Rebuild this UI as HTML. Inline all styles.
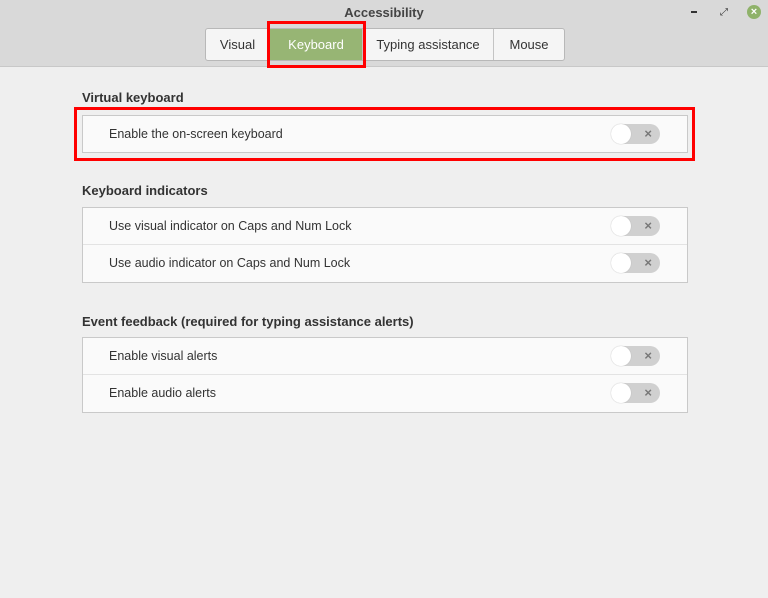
<!DOCTYPE html>
<html><head><style>
*{box-sizing:border-box;margin:0;padding:0}
body{width:768px;height:598px;background:#efefef;font-family:"Liberation Sans","DejaVu Sans",sans-serif;position:relative;overflow:hidden;color:#333}
.hdr{position:absolute;left:0;top:0;width:768px;height:67px;background:#d9d9d9;border-bottom:1px solid #c8c8c8}
.title{position:absolute;top:5px;left:0;width:768px;text-align:center;font-size:13px;font-weight:bold;color:#444}
.tabs{position:absolute;left:205px;top:28px;height:33px;display:flex;border:1px solid #b8b8b8;border-radius:3px;background:#f5f5f5;overflow:hidden}
.tab{height:31px;line-height:31px;font-size:13px;text-align:center;color:#333;border-right:1px solid #c4c4c4}
.tab:last-child{border-right:none}
.tab.act{background:#97b574;color:#fff}
.red{position:absolute;border:3px solid #f00}
h3{position:absolute;left:82px;font-size:13px;font-weight:bold;color:#333}
.box{position:absolute;left:82px;width:606px;border:1px solid #c9c9c9;background:#fafafa}
.row{height:37px;position:relative;font-size:12.5px;line-height:36px;padding-left:26px;border-bottom:1px solid #e3e3e3}
.row:last-child{border-bottom:none;height:36px}
.box.two .row:last-child{height:37px}
.tg{position:absolute;left:528px;top:8px;width:49px;height:20px;border-radius:10px;background:#d0d0d0}
.tg:before{content:"";position:absolute;left:0;top:0;width:20px;height:20px;border-radius:50%;background:#fff;box-shadow:0 0 1px #aaa}
.tg:after{content:"×";position:absolute;right:8px;top:0;line-height:19px;font-size:13px;color:#777;font-weight:bold}
</style></head><body>
<div class="hdr">
<div class="title">Accessibility</div>
<div style="position:absolute;left:691px;top:11px;width:6px;height:2px;background:#333"></div>
<div style="position:absolute;left:720px;top:7px;font-size:10px;color:#333">⤢</div>
<div style="position:absolute;left:747px;top:5px;width:14px;height:14px;border-radius:50%;background:#8fb26a;color:#fff;font-size:11px;line-height:14px;text-align:center;font-weight:bold">×</div>
<div class="tabs">
<div class="tab" style="width:64px">Visual</div>
<div class="tab act" style="width:93px">Keyboard</div>
<div class="tab" style="width:131px">Typing assistance</div>
<div class="tab" style="width:70px">Mouse</div>
</div>
</div>
<div class="red" style="left:267px;top:21px;width:99px;height:47px"></div>
<h3 style="top:90px">Virtual keyboard</h3>
<div class="box" style="top:115px"><div class="row">Enable the on-screen keyboard<div class="tg"></div></div></div>
<div class="red" style="left:74px;top:107px;width:621px;height:54px"></div>
<h3 style="top:183px">Keyboard indicators</h3>
<div class="box two" style="top:207px">
<div class="row">Use visual indicator on Caps and Num Lock<div class="tg"></div></div>
<div class="row">Use audio indicator on Caps and Num Lock<div class="tg"></div></div>
</div>
<h3 style="top:314px">Event feedback (required for typing assistance alerts)</h3>
<div class="box two" style="top:337px">
<div class="row">Enable visual alerts<div class="tg"></div></div>
<div class="row">Enable audio alerts<div class="tg"></div></div>
</div>
</body></html>
